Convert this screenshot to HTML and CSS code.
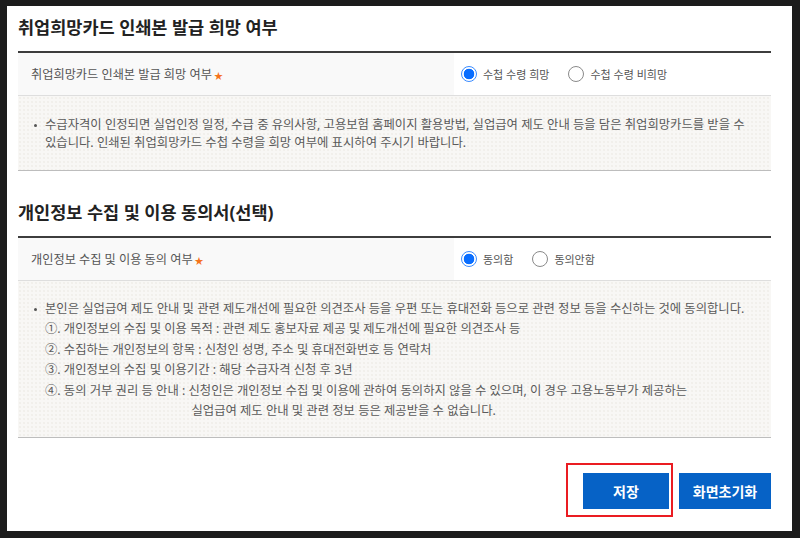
FILE: index.html
```html
<!DOCTYPE html>
<html lang="ko">
<head>
<meta charset="utf-8">
<title>취업희망카드</title>
<link rel="stylesheet" href="styles.css">
</head>
<body>
<div class="panel">
  <h2 class="section-title">취업희망카드 인쇄본 발급 희망 여부</h2>
  <div class="form-row">
    <div class="label-cell">취업희망카드 인쇄본 발급 희망 여부<span class="req">★</span></div>
    <div class="value-cell">
      <label class="radio"><input type="radio" name="card" checked><span>수첩 수령 희망</span></label>
      <label class="radio"><input type="radio" name="card"><span>수첩 수령 비희망</span></label>
    </div>
  </div>
  <div class="notice">
    <ul class="notice-list">
      <li class="bullet">수급자격이 인정되면 실업인정 일정, 수급 중 유의사항, 고용보험 홈페이지 활용방법, 실업급여 제도 안내 등을 담은 취업희망카드를 받을 수<br>있습니다. 인쇄된 취업희망카드 수첩 수령을 희망 여부에 표시하여 주시기 바랍니다.</li>
    </ul>
  </div>

  <h2 class="section-title second">개인정보 수집 및 이용 동의서(선택)</h2>
  <div class="form-row">
    <div class="label-cell">개인정보 수집 및 이용 동의 여부<span class="req">★</span></div>
    <div class="value-cell">
      <label class="radio"><input type="radio" name="agree" checked><span>동의함</span></label>
      <label class="radio"><input type="radio" name="agree"><span>동의안함</span></label>
    </div>
  </div>
  <div class="notice tall">
    <ul class="notice-list">
      <li class="bullet">본인은 실업급여 제도 안내 및 관련 제도개선에 필요한 의견조사 등을 우편 또는 휴대전화 등으로 관련 정보 등을 수신하는 것에 동의합니다.
        <ol class="sub-list">
          <li>①. 개인정보의 수집 및 이용 목적 : 관련 제도 홍보자료 제공 및 제도개선에 필요한 의견조사 등</li>
          <li>②. 수집하는 개인정보의 항목 : 신청인 성명, 주소 및 휴대전화번호 등 연락처</li>
          <li>③. 개인정보의 수집 및 이용기간 : 해당 수급자격 신청 후 3년</li>
          <li class="split"><span class="term">④. 동의 거부 권리 등 안내 :&nbsp;</span><span class="desc">신청인은 개인정보 수집 및 이용에 관하여 동의하지 않을 수 있으며, 이 경우 고용노동부가 제공하는<br>실업급여 제도 안내 및 관련 정보 등은 제공받을 수 없습니다.</span></li>
        </ol>
      </li>
    </ul>
  </div>

  <div class="actions">
    <span class="highlight"><button type="button" class="btn btn-save">저장</button></span>
    <button type="button" class="btn btn-reset">화면초기화</button>
  </div>
</div>
</body>
</html>
```

FILE: styles.css
```css
* { box-sizing: border-box; }
html, body { margin: 0; height: 100%; }
body {
  background: #1c1c1c;
  font-family: "Noto Sans", "Noto Sans CJK KR", sans-serif;
  padding: 6px 8px 7px 7px;
}
.panel {
  background: #fff;
  height: 525px;
  padding: 0 21px 0 11px;
}
.section-title {
  margin: 0 0 11px 0;
  padding-top: 8px;
  font-size: 17.5px;
  line-height: 26px;
  font-weight: 700;
  color: #222;
}
.section-title.second {
  padding-top: 0;
  margin-top: 28px;
}
.form-row {
  display: flex;
  height: 45px;
  border-top: 2px solid #3d3d3d;
  border-bottom: 1px solid #dedede;
}
.label-cell {
  width: 436px;
  background: #f9f9f9;
  display: flex;
  align-items: center;
  padding-left: 13px;
  font-size: 12.2px;
  color: #555;
}
.req {
  color: #f5731c;
  font-size: 9px;
  margin-left: 2px;
  position: relative;
  top: 1px;
}
.value-cell {
  flex: 1;
  display: flex;
  align-items: center;
  padding-left: 7px;
  gap: 19px;
}
.radio {
  display: flex;
  align-items: center;
  gap: 6px;
  font-size: 11px;
  color: #555;
}
.radio input {
  appearance: none;
  -webkit-appearance: none;
  margin: 0;
  width: 16px;
  height: 16px;
  border: 1px solid #8a8a8a;
  border-radius: 50%;
  background: #fff;
}
.radio input:checked {
  border: 1.5px solid #3b8cff;
  background: radial-gradient(circle, #0a6eff 0 5px, #fff 5.6px);
}
.notice {
  background-color: #f8f7f5;
  background-image: radial-gradient(#f1efeb 0.7px, transparent 1px);
  background-size: 4px 4px;
  border-bottom: 1px solid #bdbdbd;
  padding: 20px 16px 18px 16px;
  font-size: 12.33px;
  color: #5a5a5a;
  line-height: 18px;
}
.notice.tall {
  line-height: 20.4px;
  padding: 18px 16px 16px 16px;
}
.notice-list, .sub-list {
  list-style: none;
  margin: 0;
  padding: 0;
}
.bullet {
  position: relative;
  padding-left: 11px;
}
.bullet::before {
  content: "";
  position: absolute;
  left: 0;
  top: 8px;
  width: 3px;
  height: 3px;
  border-radius: 50%;
  background: #555;
}
.notice.tall .bullet::before { top: 9px; }
.split { display: flex; }
.term { white-space: pre; }
.desc {
  padding-left: 3px;
  text-indent: -3px;
}
.actions {
  display: flex;
  justify-content: flex-end;
  gap: 10px;
  margin-top: 35px;
}
.btn {
  height: 36px;
  border: 0;
  background: #0662c6;
  color: #fff;
  font-family: "Noto Sans", "Noto Sans CJK KR", sans-serif;
  font-weight: 700;
  font-size: 14px;
  padding: 0;
  display: block;
}
.btn-save { width: 86px; }
.btn-reset { width: 92px; }
.highlight {
  position: relative;
  display: block;
}
.highlight::after {
  content: "";
  position: absolute;
  left: -17px;
  right: -4px;
  top: -10px;
  bottom: -8px;
  border: 2px solid #ea1c22;
  pointer-events: none;
}
```
